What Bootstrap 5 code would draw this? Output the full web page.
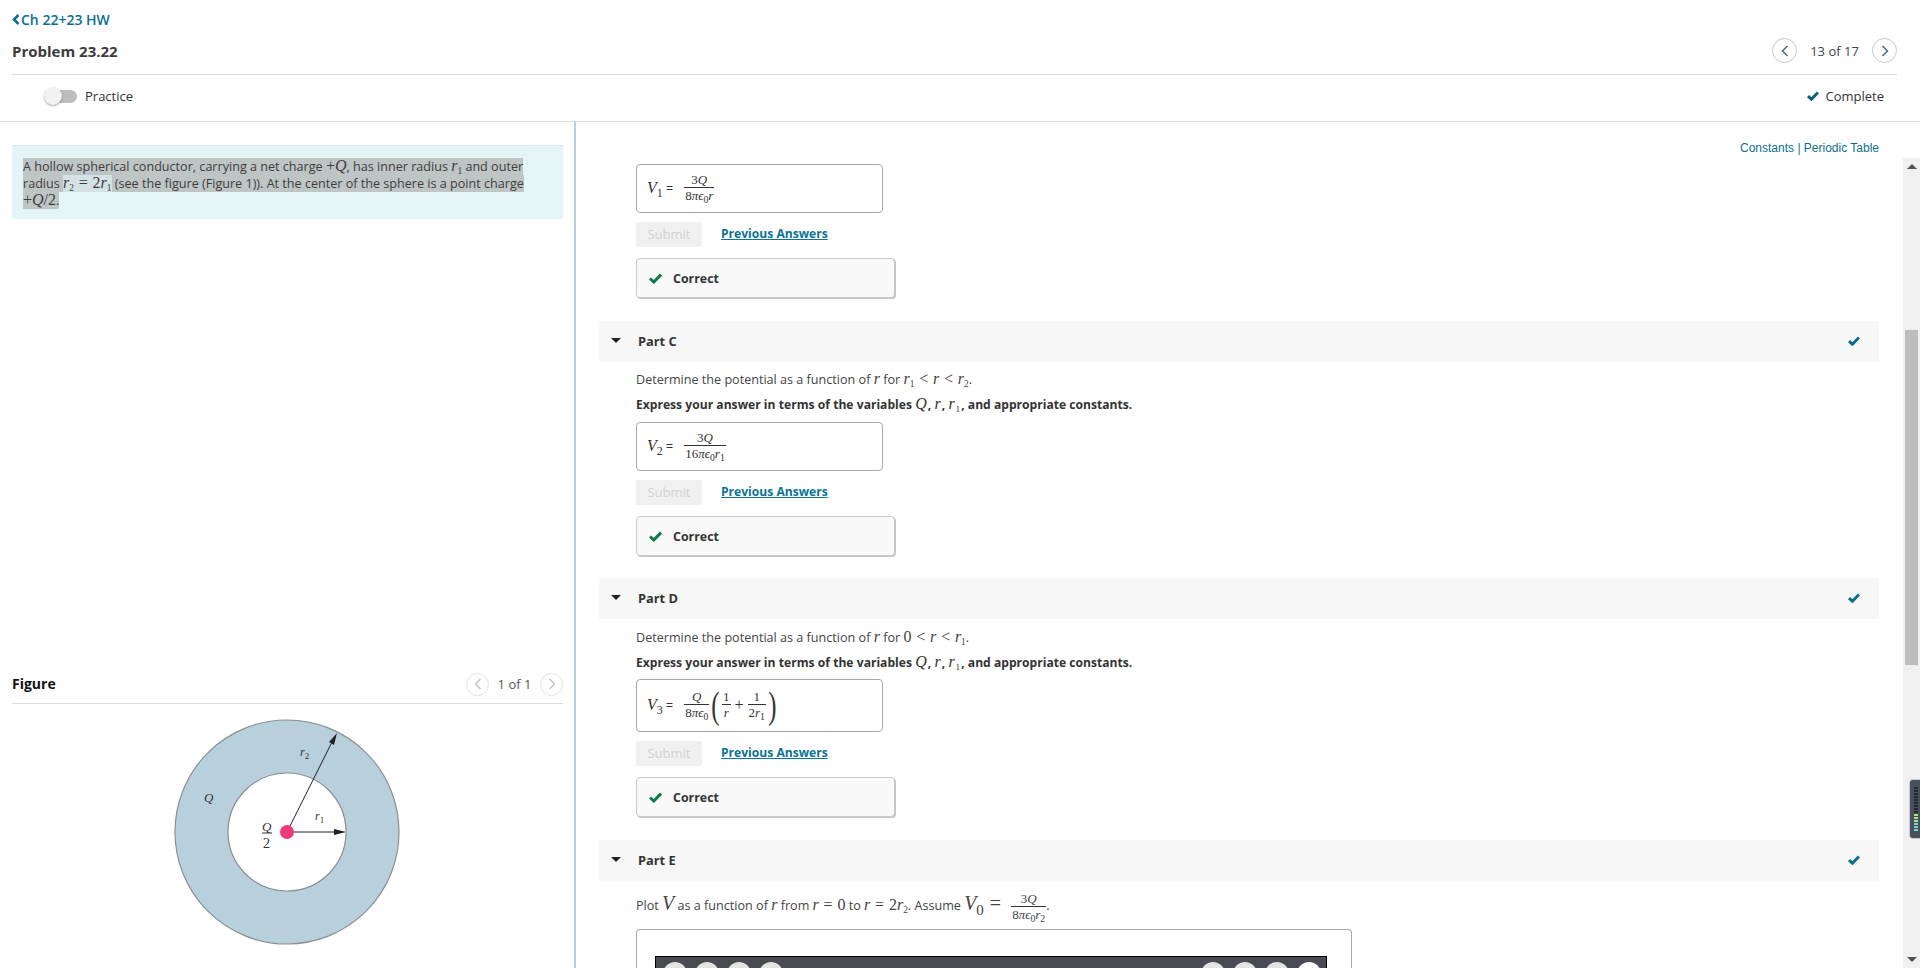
<!DOCTYPE html>
<html lang="en">
<head>
<meta charset="utf-8">
<title>Problem 23.22</title>
<link href="https://cdn.jsdelivr.net/npm/bootstrap@5.3.0/dist/css/bootstrap.min.css" rel="stylesheet">
<style>
html,body{height:968px;overflow:hidden}
body{font-family:"Open Sans",sans-serif;font-size:13px;color:#333;background:#fff;line-height:20px;position:relative}
.crumb-row{height:39px;padding-left:12px;color:#0b6f8f;font-weight:600;font-size:14px}
.crumb-row svg{margin-right:1px}
.title-row{height:36px;margin:0 23px 0 12px;padding-bottom:12px;border-bottom:1px solid #dcdcdc}
.title-txt{font-size:15px;font-weight:700;color:#3b3b3b}
.round-btn{width:25px;height:25px;border:1px solid #c8c8c8;border-radius:50%;background:#fff}
.round-btn.dim{width:23px;height:23px;border-color:#e2e2e2}
.pager-txt{width:75px;text-align:center;font-size:13px;color:#3c4654}
.prac-row{height:47px;padding:0 36px 4px 44px;border-bottom:1px solid #dcdcdc}
.tog-track{width:27px;height:13px;margin-left:6px;background:#bdbdbd;border-radius:0 7px 7px 0}
.tog-knob{width:18px;height:18px;border-radius:50%;background:#f2f2f2;box-shadow:0 1px 2px rgba(0,0,0,.35);margin-left:-6px}
.main-area{height:846px}
.left-col{width:576px;flex:none;border-right:2px solid #b9cfe4;padding:23px 12px 0 12px}
.intro-box{height:74px;width:551px;background:#e5f5f7;border-top:1px solid #d9e8ea;padding:12px 11px;font-size:12.6px;line-height:16px;color:#3d3d3d;white-space:nowrap}
.intro-box .hl{background:#bdc5c5}
.intro-box .hm{background:#d5e2e3}
.fig-block{height:298px;width:551px}
.fig-head{height:34px;border-bottom:1px solid #dcdcdc;padding-bottom:5px}
.fig-title{font-size:14px;font-weight:700;color:#111}
.fig-pager{width:51px;text-align:center;color:#555}
.right-col{min-width:0}
.tool-row{height:36px;padding:17px 41px 0 0;font-family:"Liberation Sans",sans-serif;font-size:12px;line-height:18px;color:#0e6f8e}
.scroll-area{padding:6px 24px 0 23px;height:810px}
.ans-box{width:247px;height:49px;margin-left:37px;border:1px solid #a9a9a9;border-radius:4px;padding:0 10px 2px;background:#fff}
.ans-box.tall{height:53px}
.ans-lbl{margin-right:11px;font-family:"Liberation Serif",serif;font-size:16px;white-space:nowrap}
.ans-lbl .eq{font-family:"Open Sans",sans-serif;font-size:13px;margin-left:3px}
.sub-row{margin:9px 0 0 37px;height:25px}
.btn.sub-btn,.btn.sub-btn:disabled{width:66px;height:25px;padding:0;background:#f0f0f0;border:0;border-radius:2px;color:#d2d2d2;font-size:13px;line-height:23px;opacity:1}
.prev-link{margin-left:19px;margin-bottom:2px;color:#0b7393;font-weight:700;font-size:12.1px;text-decoration:underline}
.correct-box{width:259px;height:40px;margin:11px 0 0 37px;padding:1px 12px 0;background:#f9f9f9;border:1px solid #c9c9c9;border-radius:4px;box-shadow:1px 1px 0 #c4c4c4;font-weight:700;font-size:12.4px;color:#333}
.correct-box svg{margin-right:11px}
.part-head{height:41px;margin-top:23px;padding:0 19px 2px 12px;background:#f7f7f7;font-weight:700;font-size:12.8px;color:#333}
.part-head.tight{margin-top:22px}
.tri-down{width:0;height:0;border-left:5px solid transparent;border-right:5px solid transparent;border-top:5px solid #222;margin-right:17px}
.part-copy{margin:7px 0 0 37px;height:20px;white-space:nowrap;color:#444;font-size:12.6px}
.part-copy.strong{margin-top:5px;font-weight:700;font-size:12.1px;word-spacing:.1px;color:#333}
.part-copy.strong + .ans-box{margin-top:8px}
.part-head.tight + .part-copy{margin-top:8px}
.part-head.tight + .part-copy + .strong + .ans-box{margin-top:7px}
.part-copy.plot{height:36px;margin-top:6px;line-height:32px}
.m{font-family:"Liberation Serif",serif;font-size:16px;font-weight:400}
.strong .m{margin-right:1px}
.mi{font-style:italic}
.ms{font-size:75%;vertical-align:-.3em;line-height:0}
.m.ms.lg{font-size:15px}
.rel{margin:0 .3em}
.m.lg{font-size:20px}
.frac{display:inline-flex;flex-direction:column;align-items:center;vertical-align:middle;font-family:"Liberation Serif",serif;font-size:13px;line-height:15px;font-weight:400}
.frac > .fn{padding:0 1px;border-bottom:1px solid #333;min-width:100%;text-align:center}
.frac > .fd{padding:0 1px}
.plot .frac{margin-left:4px}
.paren{font-family:"Liberation Serif",serif;font-size:38px;font-weight:200;line-height:30px;transform:scaleX(.65);display:inline-block;vertical-align:middle}
.graph-box{width:716px;height:60px;margin:6px 0 0 37px;border:1px solid #a9a9a9;border-bottom:0;border-radius:4px 4px 0 0;padding:26px 24px 0 18px}
.graph-bar{height:20px;background:#4a4a52;border:1px solid #000;border-bottom:0;padding:5px 5px 0 7px;overflow:hidden}
.gbtn{width:24px;height:24px;border-radius:50%;background:#e3e3e3;flex:none}
.gbtn.w{background:#fff}
.rail{width:17px;flex:none;background:#f0f0f0;height:810px}
.rail-btn{height:17px}
.tri-up-s{width:0;height:0;border-left:5px solid transparent;border-right:5px solid transparent;border-bottom:5px solid #505050}
.tri-dn-s{width:0;height:0;border-left:5px solid transparent;border-right:5px solid transparent;border-top:5px solid #505050}
.rail-gap{height:155px}
.rail-thumb{width:13px;height:335px;margin:0 auto;background:#bdbdbd}
.side-grip{position:absolute;right:0;top:780px;width:10px;height:58px;background:#4a4f5c;border-radius:3px 0 0 3px;box-shadow:0 0 0 1px #c9c9d1}
.side-grip::after{content:"";position:absolute;left:4px;right:2px;top:7px;height:45px;background:repeating-linear-gradient(180deg,transparent 0,transparent 2px,#4a4f5c 2px,#4a4f5c 3px),linear-gradient(180deg,#25272d 0,#25272d 58%,#a8e08c 58%,#a8e08c 80%,#70d8c8 80%,#70d8c8 100%)}
</style>
</head>
<body>
<div class="crumb-row d-flex align-items-center">
  <svg width="8" height="11" viewBox="0 0 8 11"><path d="M6.5 1 L2 5.5 L6.5 10" fill="none" stroke="#0b6f8f" stroke-width="2.6"/></svg><span>Ch 22+23 HW</span>
</div>
<div class="title-row d-flex align-items-center justify-content-between">
  <span class="title-txt">Problem 23.22</span>
  <div class="d-flex align-items-center">
    <div class="round-btn d-flex align-items-center justify-content-center"><svg width="10" height="14" viewBox="0 0 10 14"><path d="M7.5 2 L2.5 7 L7.5 12" fill="none" stroke="#4d6478" stroke-width="1.5"/></svg></div>
    <span class="pager-txt">13 of 17</span>
    <div class="round-btn d-flex align-items-center justify-content-center"><svg width="10" height="14" viewBox="0 0 10 14"><path d="M2.5 2 L7.5 7 L2.5 12" fill="none" stroke="#4d6478" stroke-width="1.5"/></svg></div>
  </div>
</div>
<div class="prac-row d-flex align-items-center justify-content-between">
  <div class="d-flex align-items-center">
    <div class="tog-track d-flex align-items-center"><div class="tog-knob"></div></div>
    <span class="ms-2">Practice</span>
  </div>
  <div class="d-flex align-items-center">
    <svg width="12" height="10" viewBox="0 0 12 10" style="margin-right:6px"><path d="M1 5.2 L4.4 8.2 L11 1.5" fill="none" stroke="#0b5f7a" stroke-width="3"/></svg>
    <span>Complete</span>
  </div>
</div>
<div class="main-area d-flex">
  <div class="left-col d-flex flex-column">
    <div class="intro-box">
      <span class="hl">A hollow spherical conductor, carrying a net charge <span class="m">+<span class="mi">Q</span></span>, has inner radius <span class="m mi">r</span><span class="m ms">1</span> and outer</span><br>
      <span class="hl">radius </span><span class="hm"><span class="m mi">r</span><span class="m ms">2</span><span class="m rel">=</span><span class="m">2<span class="mi">r</span></span><span class="m ms">1</span></span><span class="hl"> (see the figure (Figure 1)). At the center of the sphere is a point charge</span><br>
      <span class="hl"><span class="m">+<span class="mi">Q</span>/2</span>.</span>
    </div>
    <div class="fig-block mt-auto">
      <div class="fig-head d-flex align-items-center justify-content-between">
        <span class="fig-title">Figure</span>
        <div class="d-flex align-items-center">
          <div class="round-btn dim d-flex align-items-center justify-content-center"><svg width="10" height="14" viewBox="0 0 10 14"><path d="M7.5 2 L2.5 7 L7.5 12" fill="none" stroke="#c4c4c4" stroke-width="1.5"/></svg></div>
          <span class="fig-pager">1 of 1</span>
          <div class="round-btn dim d-flex align-items-center justify-content-center"><svg width="10" height="14" viewBox="0 0 10 14"><path d="M2.5 2 L7.5 7 L2.5 12" fill="none" stroke="#c4c4c4" stroke-width="1.5"/></svg></div>
        </div>
      </div>
      <svg class="d-block" width="551" height="264" viewBox="0 0 551 264">
        <circle cx="275" cy="128" r="112" fill="#b8cfdc" stroke="#8b8f92" stroke-width="1.2"/>
        <circle cx="275" cy="128" r="59" fill="#fff" stroke="#8b8f92" stroke-width="1.2"/>
        <line x1="275" y1="128" x2="322" y2="128" stroke="#222" stroke-width="1"/>
        <path d="M334 128 L322 125 L322 131 Z" fill="#222"/>
        <line x1="275" y1="128" x2="321" y2="36" stroke="#222" stroke-width="1"/>
        <path d="M325 29 L317 38 L322 41 Z" fill="#222"/>
        <circle cx="275" cy="128" r="7" fill="#ee3a77"/>
        <text x="288" y="52" font-family="Liberation Serif" font-style="italic" font-size="12" fill="#333">r<tspan font-size="9" dy="3" font-style="normal">2</tspan></text>
        <text x="303" y="116" font-family="Liberation Serif" font-style="italic" font-size="12" fill="#333">r<tspan font-size="9" dy="3" font-style="normal">1</tspan></text>
        <text x="192" y="98" font-family="Liberation Serif" font-style="italic" font-size="13" fill="#333">Q</text>
        <text x="250" y="127" font-family="Liberation Serif" font-style="italic" font-size="13" fill="#333">Q</text>
        <line x1="250" y1="129" x2="260" y2="129" stroke="#333" stroke-width="1"/>
        <text x="251" y="144" font-family="Liberation Serif" font-size="14" fill="#333">2</text>
      </svg>
    </div>
  </div>
  <div class="right-col flex-grow-1 d-flex flex-column">
    <div class="tool-row text-end">Constants | Periodic Table</div>
    <div class="d-flex">
      <div class="scroll-area flex-grow-1 overflow-hidden">
        <div class="ans-box d-flex align-items-center">
          <span class="ans-lbl"><span class="mi">V</span><span class="ms">1</span><span class="eq">=</span></span>
          <span class="frac"><span class="fn">3<span class="mi">Q</span></span><span class="fd">8<span class="mi">πϵ</span><span class="ms">0</span><span class="mi">r</span></span></span>
        </div>
        <div class="sub-row d-flex align-items-center"><button class="btn sub-btn" disabled>Submit</button><span class="prev-link">Previous Answers</span></div>
        <div class="correct-box d-flex align-items-center"><svg width="13" height="11" viewBox="0 0 13 11"><path d="M1 5.5 L4.8 9 L12 1.6" fill="none" stroke="#0a7a4a" stroke-width="3"/></svg>Correct</div>

        <div class="part-head d-flex align-items-center">
          <span class="tri-down"></span><span class="flex-grow-1">Part C</span>
          <svg width="12" height="10" viewBox="0 0 12 10"><path d="M1 5.2 L4.4 8.2 L11 1.5" fill="none" stroke="#0b6c8c" stroke-width="3"/></svg>
        </div>
        <div class="part-copy">Determine the potential as a function of <span class="m mi">r</span> for <span class="m mi">r</span><span class="m ms">1</span><span class="m rel">&lt;</span><span class="m mi">r</span><span class="m rel">&lt;</span><span class="m mi">r</span><span class="m ms">2</span>.</div>
        <div class="part-copy strong">Express your answer in terms of the variables <span class="m mi">Q</span>, <span class="m mi">r</span>, <span class="m mi">r</span><span class="m ms">1</span>, and appropriate constants.</div>
        <div class="ans-box d-flex align-items-center">
          <span class="ans-lbl"><span class="mi">V</span><span class="ms">2</span><span class="eq">=</span></span>
          <span class="frac"><span class="fn">3<span class="mi">Q</span></span><span class="fd">16<span class="mi">πϵ</span><span class="ms">0</span><span class="mi">r</span><span class="ms">1</span></span></span>
        </div>
        <div class="sub-row d-flex align-items-center"><button class="btn sub-btn" disabled>Submit</button><span class="prev-link">Previous Answers</span></div>
        <div class="correct-box d-flex align-items-center"><svg width="13" height="11" viewBox="0 0 13 11"><path d="M1 5.5 L4.8 9 L12 1.6" fill="none" stroke="#0a7a4a" stroke-width="3"/></svg>Correct</div>

        <div class="part-head tight d-flex align-items-center">
          <span class="tri-down"></span><span class="flex-grow-1">Part D</span>
          <svg width="12" height="10" viewBox="0 0 12 10"><path d="M1 5.2 L4.4 8.2 L11 1.5" fill="none" stroke="#0b6c8c" stroke-width="3"/></svg>
        </div>
        <div class="part-copy">Determine the potential as a function of <span class="m mi">r</span> for <span class="m">0</span><span class="m rel">&lt;</span><span class="m mi">r</span><span class="m rel">&lt;</span><span class="m mi">r</span><span class="m ms">1</span>.</div>
        <div class="part-copy strong">Express your answer in terms of the variables <span class="m mi">Q</span>, <span class="m mi">r</span>, <span class="m mi">r</span><span class="m ms">1</span>, and appropriate constants.</div>
        <div class="ans-box tall d-flex align-items-center">
          <span class="ans-lbl"><span class="mi">V</span><span class="ms">3</span><span class="eq">=</span></span>
          <span class="frac"><span class="fn"><span class="mi">Q</span></span><span class="fd">8<span class="mi">πϵ</span><span class="ms">0</span></span></span>
          <span class="paren">(</span>
          <span class="frac"><span class="fn">1</span><span class="fd"><span class="mi">r</span></span></span>
          <span class="m mx-1">+</span>
          <span class="frac"><span class="fn">1</span><span class="fd">2<span class="mi">r</span><span class="ms">1</span></span></span>
          <span class="paren">)</span>
        </div>
        <div class="sub-row d-flex align-items-center"><button class="btn sub-btn" disabled>Submit</button><span class="prev-link">Previous Answers</span></div>
        <div class="correct-box d-flex align-items-center"><svg width="13" height="11" viewBox="0 0 13 11"><path d="M1 5.5 L4.8 9 L12 1.6" fill="none" stroke="#0a7a4a" stroke-width="3"/></svg>Correct</div>

        <div class="part-head d-flex align-items-center">
          <span class="tri-down"></span><span class="flex-grow-1">Part E</span>
          <svg width="12" height="10" viewBox="0 0 12 10"><path d="M1 5.2 L4.4 8.2 L11 1.5" fill="none" stroke="#0b6c8c" stroke-width="3"/></svg>
        </div>
        <div class="part-copy plot">Plot <span class="m mi lg">V</span> as a function of <span class="m mi">r</span> from <span class="m mi">r</span><span class="m rel">=</span><span class="m">0</span> to <span class="m mi">r</span><span class="m rel">=</span><span class="m">2<span class="mi">r</span></span><span class="m ms">2</span>. Assume <span class="m mi lg">V</span><span class="m ms lg">0</span><span class="m lg rel">=</span><span class="frac"><span class="fn">3<span class="mi">Q</span></span><span class="fd">8<span class="mi">πϵ</span><span class="ms">0</span><span class="mi">r</span><span class="ms">2</span></span></span>.</div>
        <div class="graph-box">
          <div class="graph-bar d-flex justify-content-between">
            <div class="d-flex gap-2"><div class="gbtn"></div><div class="gbtn"></div><div class="gbtn"></div><div class="gbtn"></div></div>
            <div class="d-flex gap-2"><div class="gbtn"></div><div class="gbtn"></div><div class="gbtn"></div><div class="gbtn w"></div></div>
          </div>
        </div>
      </div>
      <div class="rail d-flex flex-column">
        <div class="rail-btn d-flex align-items-center justify-content-center"><span class="tri-up-s"></span></div>
        <div class="rail-gap"></div>
        <div class="rail-thumb"></div>
        <div class="flex-grow-1"></div>
        <div class="rail-btn d-flex align-items-center justify-content-center"><span class="tri-dn-s"></span></div>
      </div>
    </div>
  </div>
</div>
<div class="side-grip"></div>
<script src="https://cdn.jsdelivr.net/npm/bootstrap@5.3.0/dist/js/bootstrap.bundle.min.js"></script>
</body>
</html>
